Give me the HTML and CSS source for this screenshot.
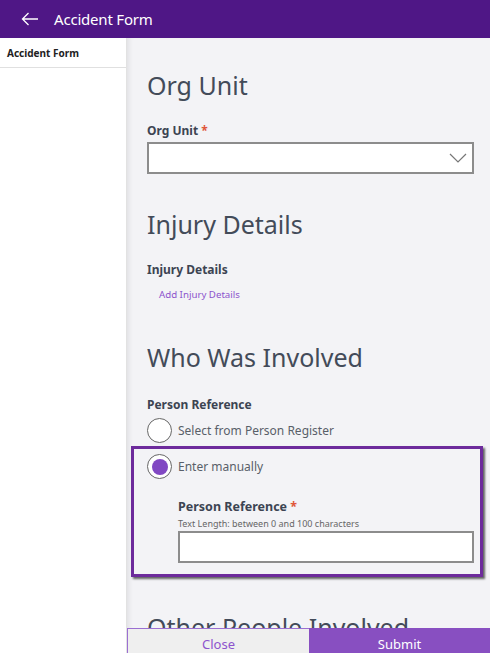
FILE: index.html
```html
<!DOCTYPE html>
<html lang="en">
<head>
    <meta charset="UTF-8">
    <meta name="viewport" content="width=device-width, initial-scale=1.0">
    <title>Accident Form</title>
    <link rel="stylesheet" href="styles.css">
</head>
<body>

    <div class="topbar">
        <svg class="back" width="18" height="14" viewBox="0 0 18 14">
            <path d="M17 7H1.5M7.5 1L1.5 7l6 6" fill="none" stroke="#fff" stroke-width="1.3"/>
        </svg>
        <span class="topbar-title">Accident Form</span>
    </div>

    <div class="layout">
        <div class="sidebar">
            <div class="nav-item">Accident Form</div>
        </div>

        <div class="main">
            <div class="content">
                <div class="section">
                    <h2>Org Unit</h2>
                    <div class="label">Org Unit <span class="req">*</span></div>
                    <div class="select">
                        <svg width="18" height="10" viewBox="0 0 18 10">
                            <path d="M1 1l8 8 8-8" fill="none" stroke="#777" stroke-width="1.2"/>
                        </svg>
                    </div>
                </div>

                <div class="section">
                    <h2>Injury Details</h2>
                    <div class="label">Injury Details</div>
                    <a class="add-link" href="#">Add Injury Details</a>
                </div>

                <div class="section">
                    <h2>Who Was Involved</h2>
                    <div class="label label-wide">Person Reference</div>
                    <div class="radio-row">
                        <span class="radio"></span>
                        <span class="radio-text">Select from Person Register</span>
                    </div>
                    <div class="highlight">
                        <div class="radio-row">
                            <span class="radio checked"></span>
                            <span class="radio-text">Enter manually</span>
                        </div>
                        <div class="sub-field">
                            <div class="label">Person Reference <span class="req">*</span></div>
                            <div class="hint">Text Length: between 0 and 100 characters</div>
                            <div class="text-input"></div>
                        </div>
                    </div>
                </div>

                <div class="section">
                    <h2>Other People Involved</h2>
                </div>
            </div>

            <div class="footer">
                <button class="btn-close">Close</button>
                <button class="btn-submit">Submit</button>
            </div>
        </div>
    </div>

</body>
</html>
```

FILE: styles.css
```css
body {
    font-family: "Noto Sans", "Open Sans", sans-serif;
    margin: 0;
    height: 653px;
    overflow: hidden;
    display: flex;
    flex-direction: column;
}
.topbar {
    height: 38px;
    background-color: #4f1786;
    display: flex;
    align-items: center;
    color: #fff;
    flex-shrink: 0;
}
.back {
    margin-left: 21px;
    margin-right: 15px;
}
.topbar-title {
    font-size: 15px;
    letter-spacing: -0.2px;
}
.layout {
    flex: 1;
    display: flex;
    min-height: 0;
}
.sidebar {
    width: 126px;
    background-color: #fff;
    border-right: 1px solid #e2e2e2;
    flex-shrink: 0;
}
.nav-item {
    font-size: 10px;
    font-weight: bold;
    color: #222;
    height: 29px;
    line-height: 30px;
    padding-left: 7px;
    border-bottom: 1px solid #e0e0e0;
}
.main {
    flex: 1;
    display: flex;
    flex-direction: column;
    min-width: 0;
    background-color: #f3f3f6;
    box-shadow: inset 5px 0 5px -3px rgba(0, 0, 0, 0.08);
}
.content {
    flex: 1;
    overflow: hidden;
    padding: 0 16px 0 20px;
}
.section h2 {
    font-size: 25px;
    font-weight: normal;
    color: #434b59;
    margin: 34px 0 0;
    line-height: 32px;
}
.section:first-child h2 {
    margin-top: 31px;
}
.label {
    font-size: 12px;
    font-weight: bold;
    color: #3c4452;
    margin-top: 22px;
    line-height: 16px;
}
.label-wide {
    margin-top: 24px;
}
.req {
    color: #e0563a;
}
.select {
    margin-top: 3px;
    height: 28px;
    border: 2px solid #8c8c8c;
    background-color: #fff;
    display: flex;
    align-items: center;
    justify-content: flex-end;
    padding-right: 5px;
}
.add-link {
    display: block;
    font-size: 9.7px;
    color: #8d54cd;
    text-decoration: none;
    margin: 10px 0 0 12px;
    padding-bottom: 6px;
}
.radio-row {
    display: flex;
    align-items: center;
    margin-top: 5px;
}
.radio {
    width: 23px;
    height: 23px;
    border: 1.5px solid #666;
    border-radius: 50%;
    background-color: #fff;
    display: flex;
    align-items: center;
    justify-content: center;
    flex-shrink: 0;
}
.radio.checked::after {
    content: "";
    width: 16px;
    height: 16px;
    border-radius: 50%;
    background-color: #8148c3;
}
.radio-text {
    font-size: 12px;
    color: #595f69;
    margin-left: 6px;
}
.highlight {
    margin: 3px -9px 0 -16px;
    border: 3px solid #6d2b9c;
    box-shadow: 2px 2px 2px rgba(0, 0, 0, 0.6);
    padding: 5px 0 11px 13px;
}
.highlight .radio-row {
    margin-top: 0;
}
.sub-field {
    padding-left: 31px;
    padding-right: 6px;
}
.sub-field .label {
    font-size: 12.5px;
    margin-top: 20px;
}
.hint {
    font-size: 9px;
    color: #666;
    margin-top: 2px;
}
.text-input {
    margin-top: 1px;
    height: 28px;
    border: 2px solid #8c8c8c;
    background-color: #fff;
}
.footer {
    height: 25px;
    display: flex;
    flex-shrink: 0;
}
.footer button {
    flex: 1;
    font-family: inherit;
    font-size: 13px;
    border: none;
    padding: 6px 0 0;
    margin: 0;
    cursor: pointer;
}
.btn-close {
    background-color: #efefef;
    color: #8d54cd;
    border-top: 1px solid #9b6fd2 !important;
    border-left: 1px solid #9b6fd2 !important;
}
.btn-submit {
    background-color: #884fc1;
    color: #fff;
}
```
